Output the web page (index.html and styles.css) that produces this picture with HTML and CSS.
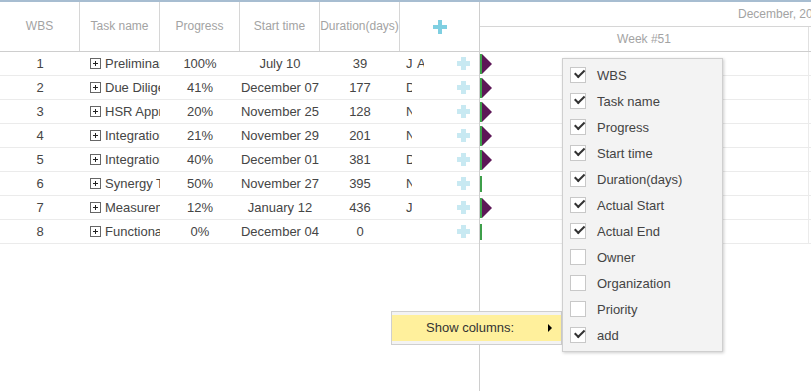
FILE: index.html
```html
<!DOCTYPE html>
<html>
<head>
  <meta charset="UTF-8">
  <title>Gantt</title>
  <link rel="stylesheet" href="styles.css">
</head>
<body>
  <div class="gantt">
    <div class="grid">
      <div class="grid-head">
        <div class="hcell">WBS</div>
        <div class="hcell">Task name</div>
        <div class="hcell">Progress</div>
        <div class="hcell">Start time</div>
        <div class="hcell">Duration(days)</div>
        <div class="hcell hadd">
          <svg width="14" height="14" viewBox="0 0 14 14"><rect x="5" y="0" width="4" height="14" fill="#7fcfe1"/><rect x="0" y="5" width="14" height="4" fill="#7fcfe1"/></svg>
        </div>
      </div>

      <div class="row">
        <div class="cell">1</div>
        <div class="cell name"><span class="tree"></span>Preliminary Analysis</div>
        <div class="cell">100%</div>
        <div class="cell">July 10</div>
        <div class="cell">39</div>
        <div class="cell tiny">July 10</div>
        <div class="cell tiny t2">August 18</div>
        <div class="cell add"><i class="plus"></i></div>
      </div>
      <div class="row">
        <div class="cell">2</div>
        <div class="cell name"><span class="tree"></span>Due Diligence</div>
        <div class="cell">41%</div>
        <div class="cell">December 07</div>
        <div class="cell">177</div>
        <div class="cell tiny">December 07</div>
        <div class="cell tiny t2"></div>
        <div class="cell add"><i class="plus"></i></div>
      </div>
      <div class="row">
        <div class="cell">3</div>
        <div class="cell name"><span class="tree"></span>HSR Approval</div>
        <div class="cell">20%</div>
        <div class="cell">November 25</div>
        <div class="cell">128</div>
        <div class="cell tiny">November 25</div>
        <div class="cell tiny t2"></div>
        <div class="cell add"><i class="plus"></i></div>
      </div>
      <div class="row">
        <div class="cell">4</div>
        <div class="cell name"><span class="tree"></span>Integration Planning</div>
        <div class="cell">21%</div>
        <div class="cell">November 29</div>
        <div class="cell">201</div>
        <div class="cell tiny">November 29</div>
        <div class="cell tiny t2"></div>
        <div class="cell add"><i class="plus"></i></div>
      </div>
      <div class="row">
        <div class="cell">5</div>
        <div class="cell name"><span class="tree"></span>Integration Execution</div>
        <div class="cell">40%</div>
        <div class="cell">December 01</div>
        <div class="cell">381</div>
        <div class="cell tiny">December 01</div>
        <div class="cell tiny t2"></div>
        <div class="cell add"><i class="plus"></i></div>
      </div>
      <div class="row">
        <div class="cell">6</div>
        <div class="cell name"><span class="tree"></span>Synergy Tracking</div>
        <div class="cell">50%</div>
        <div class="cell">November 27</div>
        <div class="cell">395</div>
        <div class="cell tiny">November 27</div>
        <div class="cell tiny t2"></div>
        <div class="cell add"><i class="plus"></i></div>
      </div>
      <div class="row">
        <div class="cell">7</div>
        <div class="cell name"><span class="tree"></span>Measurement</div>
        <div class="cell">12%</div>
        <div class="cell">January 12</div>
        <div class="cell">436</div>
        <div class="cell tiny">January 12</div>
        <div class="cell tiny t2"></div>
        <div class="cell add"><i class="plus"></i></div>
      </div>
      <div class="row">
        <div class="cell">8</div>
        <div class="cell name"><span class="tree"></span>Functional Integration</div>
        <div class="cell">0%</div>
        <div class="cell">December 04</div>
        <div class="cell">0</div>
        <div class="cell tiny"></div>
        <div class="cell tiny t2"></div>
        <div class="cell add"><i class="plus"></i></div>
      </div>
    </div>

    <div class="chart">
      <div class="scale">
        <div class="month">December, 2018</div>
        <div class="weeks"><div class="week">Week #51</div></div>
      </div>
      <div class="crow"><div class="ccell"><i class="start"></i><i class="tri"></i></div></div>
      <div class="crow"><div class="ccell"><i class="start"></i><i class="tri"></i></div></div>
      <div class="crow"><div class="ccell"><i class="start"></i><i class="tri"></i></div></div>
      <div class="crow"><div class="ccell"><i class="start"></i><i class="tri"></i></div></div>
      <div class="crow"><div class="ccell"><i class="start"></i><i class="tri"></i></div></div>
      <div class="crow"><div class="ccell"><i class="start short"></i></div></div>
      <div class="crow"><div class="ccell"><i class="start"></i><i class="tri"></i></div></div>
      <div class="crow"><div class="ccell"><i class="start short"></i></div></div>
    </div>
  </div>

  <!-- context menu -->
  <div class="ctx">
    <div class="ctx-item">Show columns:<i class="arrow"></i></div>
  </div>
  <div class="sub">
    <div class="opt"><span class="box on"></span>WBS</div>
    <div class="opt"><span class="box on"></span>Task name</div>
    <div class="opt"><span class="box on"></span>Progress</div>
    <div class="opt"><span class="box on"></span>Start time</div>
    <div class="opt"><span class="box on"></span>Duration(days)</div>
    <div class="opt"><span class="box on"></span>Actual Start</div>
    <div class="opt"><span class="box on"></span>Actual End</div>
    <div class="opt"><span class="box"></span>Owner</div>
    <div class="opt"><span class="box"></span>Organization</div>
    <div class="opt"><span class="box"></span>Priority</div>
    <div class="opt"><span class="box on"></span>add</div>
  </div>
</body>
</html>
```

FILE: styles.css
```css
body {
  margin: 0;
  font-family: "Liberation Sans", Arial, sans-serif;
  font-size: 12px;
  overflow: hidden;
}

.gantt {
  display: flex;
  height: 389px;
  border-top: 2px solid #a7bdd1;
}

.grid {
  width: 479px;
  flex-shrink: 0;
  border-right: 1px solid #cecece;
}

.grid-head {
  display: flex;
  height: 49px;
  border-bottom: 1px solid #cecece;
  color: #a3a3a3;
}

.hcell {
  width: 79px;
  border-right: 1px solid #d6d6d6;
  line-height: 49px;
  text-align: center;
  white-space: nowrap;
  overflow: hidden;
}

.hadd {
  width: 79px;
  border-right: none;
  display: flex;
  align-items: center;
  justify-content: center;
}

.row {
  display: flex;
  height: 23px;
  line-height: 23px;
  border-bottom: 1px solid #ebebeb;
  color: #454545;
  font-size: 13px;
}

.cell {
  width: 80px;
  text-align: center;
  white-space: nowrap;
  overflow: hidden;
}

.name {
  text-align: left;
  padding-left: 10px;
  width: 70px;
  display: flex;
  align-items: center;
}

/* expand toggle: boxed plus */
.tree {
  position: relative;
  width: 9px;
  height: 9px;
  border: 1px solid #666;
  background: #fff;
  margin-right: 4px;
  flex-shrink: 0;
}

.tree::before,
.tree::after {
  content: "";
  position: absolute;
  background: #222;
}

.tree::before {
  left: 2px;
  top: 4px;
  width: 5px;
  height: 1px;
}

.tree::after {
  left: 4px;
  top: 2px;
  width: 1px;
  height: 5px;
}

.tiny {
  width: 6px;
  padding-left: 6px;
  text-align: left;
}

.t2 {
  padding-left: 5px;
  width: 7px;
}

.add {
  width: 46px;
  display: flex;
  align-items: center;
  justify-content: flex-end;
  padding-right: 9px;
}

.plus {
  position: relative;
  width: 13px;
  height: 13px;
}

.plus::before,
.plus::after {
  content: "";
  position: absolute;
  background: #c8e9f2;
}

.plus::before {
  left: 4px;
  top: 0;
  width: 5px;
  height: 13px;
}

.plus::after {
  left: 0;
  top: 4px;
  width: 13px;
  height: 5px;
}

.chart {
  flex: 1;
  overflow: hidden;
}

.scale {
  height: 49px;
  border-bottom: 1px solid #cecece;
  color: #a3a3a3;
}

.month {
  height: 24px;
  line-height: 24px;
  border-bottom: 1px solid #d6d6d6;
  padding-left: 258px;
  white-space: nowrap;
}

.weeks {
  height: 24px;
}

.week {
  width: 328px;
  height: 24px;
  line-height: 24px;
  text-align: center;
  border-right: 1px solid #e0e0e0;
}

.crow {
  height: 23px;
  border-bottom: 1px solid #ebebeb;
}

.ccell {
  width: 328px;
  height: 23px;
  border-right: 1px solid #ebebeb;
  display: flex;
  align-items: center;
}

.start {
  width: 2px;
  height: 20px;
  background: #3e9f4a;
}

.start.short {
  height: 16px;
}

.tri {
  width: 0;
  height: 0;
  border-left: 10px solid #5d1757;
  border-top: 10px solid transparent;
  border-bottom: 10px solid transparent;
}

.ctx {
  position: absolute;
  left: 391px;
  top: 311px;
  width: 169px;
  border: 1px solid #cfcfcf;
  background: #f3f3f3;
  padding: 3px 0;
}

.ctx-item {
  height: 26px;
  line-height: 26px;
  background: #fff09c;
  padding-left: 34px;
  font-size: 13px;
  color: #333;
  display: flex;
  align-items: center;
}

.arrow {
  width: 0;
  height: 0;
  margin-left: auto;
  margin-right: 9px;
  border-left: 4px solid #000;
  border-top: 4px solid transparent;
  border-bottom: 4px solid transparent;
}

.sub {
  position: absolute;
  left: 562px;
  top: 58px;
  width: 159px;
  border: 1px solid #cfcfcf;
  background: #f3f3f3;
  padding: 3px 0;
  box-shadow: 1px 1px 3px rgba(0, 0, 0, 0.2);
}

.opt {
  height: 26px;
  display: flex;
  align-items: center;
  padding-left: 7px;
  font-size: 13px;
  color: #444;
}

.box {
  width: 14px;
  height: 14px;
  border: 1px solid #c8c8c8;
  background: #fff;
  margin-right: 11px;
  position: relative;
}

.box.on::after {
  content: "";
  position: absolute;
  left: 3px;
  top: 2px;
  width: 8px;
  height: 4px;
  border-left: 2px solid #333;
  border-bottom: 2px solid #333;
  transform: translateY(4px) rotate(-45deg);
  transform-origin: left top;
}
```
